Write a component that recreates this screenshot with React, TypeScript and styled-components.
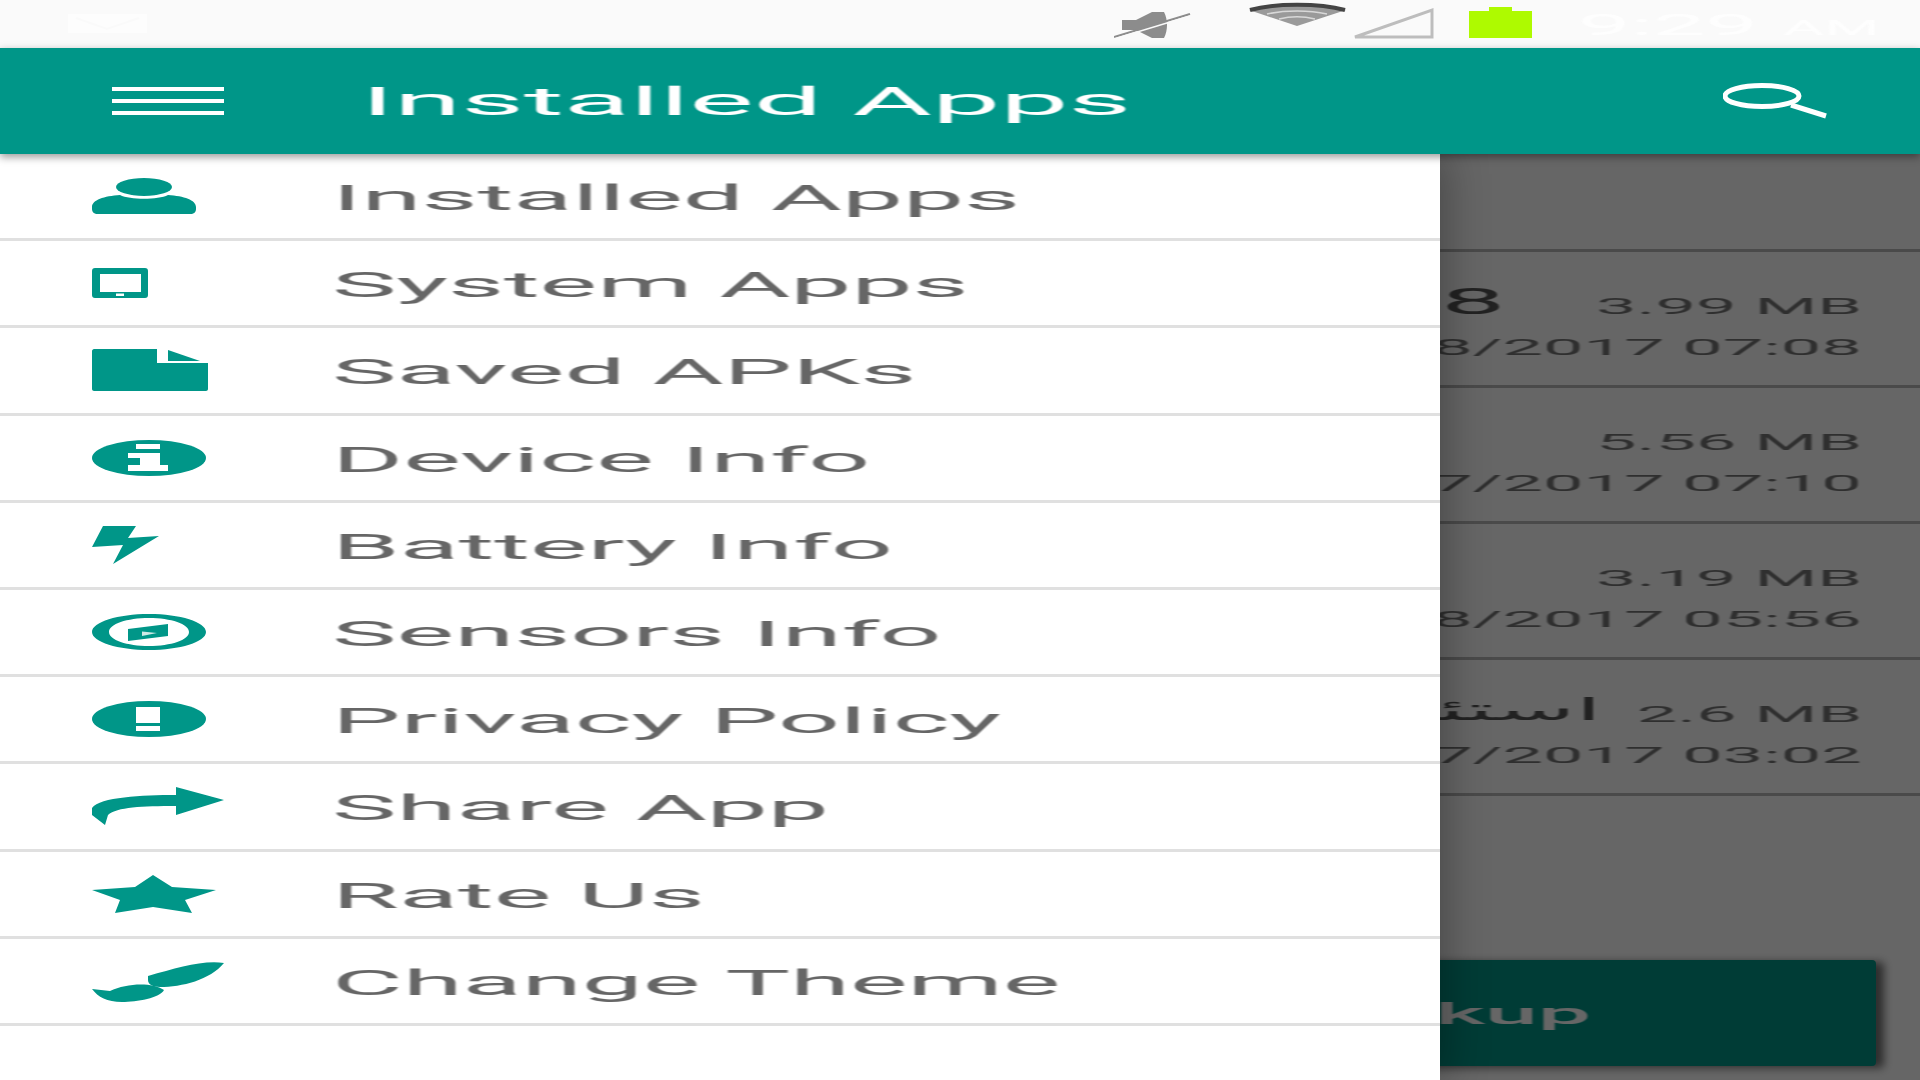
import React from "react";
import styled, { createGlobalStyle } from "styled-components";

const TEAL = "#009688";
const STRETCH = 3.16;

const GlobalStyle = createGlobalStyle`
  html, body {
    margin: 0;
    padding: 0;
    background: #fff;
    font-family: Roboto, "Liberation Sans", sans-serif;
  }
`;

const Screen = styled.div`
  width: 1920px;
  height: 1080px;
  display: flex;
  flex-direction: column;
  overflow: hidden;
`;

// the capture is a phone screen pulled wide, so every label is stretched the same way
const Stretched = styled.span<{ $from?: string; $size: number; $color: string }>`
  display: inline-block;
  white-space: nowrap;
  font-size: ${(p) => p.$size}px;
  color: ${(p) => p.$color};
  transform: scaleX(${STRETCH});
  transform-origin: ${(p) => p.$from || "left"} center;
  filter: blur(0.4px);
`;

const ArabicName = styled(Stretched)`
  font-family: "DejaVu Sans", sans-serif;
`;

const StatusBar = styled.div`
  height: 48px;
  flex: none;
  display: flex;
  background: #fafafa;
  padding-left: 68px;
`;

const StatusIcons = styled.div`
  margin-left: auto;
  display: flex;
  align-items: flex-start;
  padding-right: 43px;
`;

const StatusGlyph = styled.svg<{ $gap: number }>`
  display: block;
  margin-left: ${(p) => p.$gap}px;
`;

const MailIcon = styled.svg`
  display: block;
`;

const Clock = styled.div`
  width: 299px;
  margin-left: 46px;
  height: 48px;
  display: flex;
  align-items: baseline;
  line-height: 50px;
`;

const ClockSuffix = styled(Stretched)`
  margin-left: 148px;
`;

const Toolbar = styled.div`
  height: 106px;
  flex: none;
  display: flex;
  align-items: center;
  padding: 0 93px 0 112px;
  background: ${TEAL};
  box-shadow: 0 3px 8px rgba(0, 0, 0, 0.4);
  position: relative;
  z-index: 3;
`;

const MenuIcon = styled.svg`
  display: block;
  flex: none;
`;

const ToolbarTitle = styled.div`
  margin-left: 137px;
  line-height: 96px;
  padding-top: 10px;
`;

const ToolbarSearch = styled.svg`
  display: block;
  margin-left: auto;
`;

const Body = styled.div`
  flex: 1;
  position: relative;
  overflow: hidden;
`;

const Page = styled.div`
  display: flex;
  flex-direction: column;
  height: 100%;
  padding-top: 95px;
  box-sizing: border-box;
  background: #fff;
`;

const ApkRow = styled.div`
  height: 136px;
  flex: none;
  box-sizing: border-box;
  padding: 39px 58px 0 0;
  border-top: 3px solid #b8b8b8;
`;

const ApkFirstLine = styled.div`
  display: flex;
  justify-content: flex-end;
  align-items: flex-start;
  height: 32px;
  line-height: 32px;
`;

const ApkName = styled.div<{ $gutter: number; $nudge: number }>`
  padding-right: ${(p) => p.$gutter}px;
  margin-top: ${(p) => p.$nudge}px;
`;

const ApkSize = styled.div`
  width: 260px;
  text-align: right;
`;

const ApkDate = styled.div`
  margin-top: 10px;
  text-align: right;
  line-height: 30px;
`;

const RowsEnd = styled.div`
  border-top: 3px solid #b8b8b8;
`;

const BackupButton = styled.div`
  margin: 164px 44px 0 40px;
  height: 106px;
  flex: none;
  display: flex;
  align-items: center;
  justify-content: flex-end;
  padding-right: 285px;
  background: ${TEAL};
  border-radius: 4px;
  box-shadow: 8px 2px 8px rgba(0, 0, 0, 0.55);
  font-weight: 500;
`;

const Scrim = styled.div`
  position: absolute;
  inset: 0;
  background: rgba(0, 0, 0, 0.6);
`;

const Drawer = styled.nav`
  position: absolute;
  top: 0;
  left: 0;
  bottom: 0;
  width: 1440px;
  background: #fff;
  box-shadow: 6px 0 40px rgba(0, 0, 0, 0.3);
  z-index: 2;
`;

const DrawerItem = styled.div`
  height: 87.2px;
  box-sizing: border-box;
  display: flex;
  align-items: center;
  padding-left: 92px;
  border-bottom: 3px solid #e0e0e0;
`;

const ItemIcon = styled.div`
  width: 240px;
  flex: none;
  display: flex;
  align-items: center;
`;

const ItemLabel = styled.div`
  padding-top: 4px;
`;

const Glyph = styled.svg`
  display: block;
  fill: ${TEAL};
`;

type DrawerEntry = { label: string; w: number; h: number; art: React.ReactNode };

const drawerEntries: DrawerEntry[] = [
  {
    label: "Installed Apps",
    w: 104,
    h: 36,
    art: (
      <>
        <ellipse cx="52" cy="9" rx="28" ry="9" />
        <path d="M0 29C0 22 12 18 28 17C38 22 66 22 76 17C92 18 104 22 104 29V31C104 34 102 36 98 36H6C2 36 0 34 0 31Z" />
      </>
    ),
  },
  {
    label: "System Apps",
    w: 56,
    h: 30,
    art: (
      <path
        fillRule="evenodd"
        d="M3 0H53C55 0 56 1 56 3V27C56 29 55 30 53 30H3C1 30 0 29 0 27V3C0 1 1 0 3 0ZM8 6V24H49V6ZM24 25.5V28H32V25.5Z"
      />
    ),
  },
  {
    label: "Saved APKs",
    w: 116,
    h: 42,
    art: (
      <>
        <path d="M2 0H65V14H116V40C116 41 115 42 114 42H2C1 42 0 41 0 40V2C0 1 1 0 2 0Z" />
        <path d="M76 1L108 12H76Z" />
      </>
    ),
  },
  {
    label: "Device Info",
    w: 114,
    h: 36,
    art: (
      <>
        <ellipse cx="57" cy="18" rx="57" ry="18" />
        <path fill="#fff" d="M44 4H68V9H44ZM36 13H68V25H76V31H36V25H48V18H36Z" />
      </>
    ),
  },
  {
    label: "Battery Info",
    w: 68,
    h: 40,
    art: <path d="M11 1H44L36 13L67 11L21 39L31 20L0 22Z" />,
  },
  {
    label: "Sensors Info",
    w: 114,
    h: 36,
    art: (
      <>
        <path
          fillRule="evenodd"
          d="M57 0C88 0 114 8 114 18C114 28 88 36 57 36C26 36 0 28 0 18C0 8 26 0 57 0ZM57 4C35 4 17 10 17 18C17 26 35 32 57 32C79 32 97 26 97 18C97 10 79 4 57 4Z"
        />
        <path d="M36 15L76 10V22L36 27Z" />
        <path fill="#cfe9e6" d="M50 17.5L65 19L50 22Z" />
      </>
    ),
  },
  {
    label: "Privacy Policy",
    w: 114,
    h: 36,
    art: (
      <>
        <ellipse cx="57" cy="18" rx="57" ry="18" />
        <path fill="#fff" d="M44 6H68V22H44ZM44 25H68V30H44Z" />
      </>
    ),
  },
  {
    label: "Share App",
    w: 132,
    h: 38,
    art: <path d="M84 0L132 13L84 28V19C50 19 25 20 16 28L13 38L0 28V21C8 10 50 8 84 8Z" />,
  },
  {
    label: "Rate Us",
    w: 124,
    h: 38,
    art: <path d="M0 15L43 12L61 0L80 12L124 15L93 25L100 38L61 32L23 38L28 25Z" />,
  },
  {
    label: "Change Theme",
    w: 132,
    h: 42,
    art: (
      <>
        <path d="M56 16C85 8 110 0 132 3C118 20 90 27 68 27C60 27 56 24 56 20Z" />
        <path d="M0 29L18 31C35 23 60 22 72 30C68 38 45 42 30 42C15 42 6 37 0 29Z" />
      </>
    ),
  },
];

const apkRows = [
  { name: "8", arabic: false, gutter: 97, nudge: -5, size: "3.99 MB", date: "08/08/2017 07:08" },
  { name: "", arabic: false, gutter: 0, nudge: 0, size: "5.56 MB", date: "17/07/2017 07:10" },
  { name: "", arabic: false, gutter: 0, nudge: 0, size: "3.19 MB", date: "18/08/2017 05:56" },
  { name: "استئناف", arabic: true, gutter: 0, nudge: -5, size: "2.6 MB", date: "17/07/2017 03:02" },
];

const MailGlyph = () => (
  <MailIcon width="80" height="48" viewBox="0 0 80 48">
    <rect x="0" y="14" width="79" height="19" fill="#fdfdfd" />
    <path d="M8 18L39 29L71 18" stroke="#fafafa" strokeWidth="2" fill="none" />
  </MailIcon>
);

const StatusRow = () => (
  <StatusIcons>
    <StatusGlyph $gap={0} width="77" height="48" viewBox="0 0 77 48">
      <path fill="#8c8c8c" d="M8 20H22L38 12H50C54 20 54 30 50 38H38L22 30H8Z" />
      <path d="M0 37L76 14" stroke="#8c8c8c" strokeWidth="2" />
      <path d="M0 39L76 16" stroke="#fafafa" strokeWidth="1.5" />
    </StatusGlyph>
    <StatusGlyph $gap={58} width="97" height="48" viewBox="0 0 97 48">
      <path fill="#9a9a9a" d="M0 10C26 2 70 2 97 10L48 26Z" />
      <path d="M1 10C26 3 70 3 96 10" stroke="#444" strokeWidth="4" fill="none" />
      <path d="M18 14C36 10 60 10 78 14M30 19C42 16 54 16 66 19" stroke="#d8d8d8" strokeWidth="1.5" fill="none" />
    </StatusGlyph>
    <StatusGlyph $gap={6} width="83" height="48" viewBox="0 0 83 48">
      <path d="M3 37L80 10V37Z" fill="none" stroke="#bdbdbd" strokeWidth="3" />
    </StatusGlyph>
    <StatusGlyph $gap={34} width="63" height="48" viewBox="0 0 63 48">
      <path fill="#aefa00" d="M0 11H20V7H43V11H63V38H0Z" />
    </StatusGlyph>
    <Clock>
      <Stretched $size={29.5} $color="#fefefe">9:29</Stretched>
      <ClockSuffix $size={20} $color="#fefefe">AM</ClockSuffix>
    </Clock>
  </StatusIcons>
);

export default function App() {
  return (
    <Screen>
      <GlobalStyle />
      <StatusBar>
        <MailGlyph />
        <StatusRow />
      </StatusBar>
      <Toolbar>
        <MenuIcon width="112" height="30" viewBox="0 0 112 30">
          <path d="M0 3H112M0 15H112M0 27H112" stroke="#fff" strokeWidth="4" />
        </MenuIcon>
        <ToolbarTitle>
          <Stretched $size={38.5} $color="#fff">Installed Apps</Stretched>
        </ToolbarTitle>
        <ToolbarSearch width="104" height="36" viewBox="0 0 104 36">
          <ellipse cx="39" cy="13" rx="37" ry="10.5" fill="none" stroke="#fff" strokeWidth="5" />
          <path d="M68 22L103 33" stroke="#fff" strokeWidth="5" />
        </ToolbarSearch>
      </Toolbar>
      <Body>
        <Page>
          {apkRows.map((row) => (
            <ApkRow key={row.date}>
              <ApkFirstLine>
                <ApkName $gutter={row.gutter} $nudge={row.nudge}>
                  {row.arabic ? (
                    <ArabicName $from="right" $size={30} $color="#555">{row.name}</ArabicName>
                  ) : (
                    row.name && <Stretched $from="right" $size={36} $color="#555">{row.name}</Stretched>
                  )}
                </ApkName>
                <ApkSize>
                  <Stretched $from="right" $size={22.8} $color="#757575">{row.size}</Stretched>
                </ApkSize>
              </ApkFirstLine>
              <ApkDate>
                <Stretched $from="right" $size={22.8} $color="#757575">{row.date}</Stretched>
              </ApkDate>
            </ApkRow>
          ))}
          <RowsEnd />
          <BackupButton>
            <Stretched $from="right" $size={30} $color="#fff">Backup</Stretched>
          </BackupButton>
        </Page>
        <Scrim />
        <Drawer>
          {drawerEntries.map((entry) => (
            <DrawerItem key={entry.label}>
              <ItemIcon>
                <Glyph width={entry.w} height={entry.h} viewBox={`0 0 ${entry.w} ${entry.h}`}>
                  {entry.art}
                </Glyph>
              </ItemIcon>
              <ItemLabel>
                <Stretched $size={34.4} $color="#666">{entry.label}</Stretched>
              </ItemLabel>
            </DrawerItem>
          ))}
        </Drawer>
      </Body>
    </Screen>
  );
}
